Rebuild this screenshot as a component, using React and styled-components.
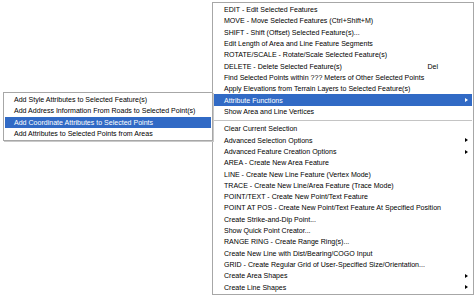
import React from 'react'
import styled, { createGlobalStyle } from 'styled-components'

const GlobalStyle = createGlobalStyle`
  body {
    margin: 0;
    background: #fff;
    font-family: "Liberation Sans", Arial, sans-serif;
  }
`

const Screen = styled.div`
  position: relative;
  width: 474px;
  height: 295px;
  overflow: hidden;
  background: #fff;
`

const Menu = styled.div`
  display: flex;
  flex-direction: column;
  box-sizing: border-box;
  width: 262px;
  margin: 2px 0 0 212px;
  padding: 1px;
  background: #fff;
  border: 1px solid #a7a7a7;
`

const SubMenu = styled(Menu)`
  position: absolute;
  left: 3px;
  top: 92px;
  width: 210px;
  margin: 0;
  box-shadow: 1px 1px 0 #c9c9c9;
`

const Item = styled.div`
  display: flex;
  align-items: center;
  height: 11.3px;
  padding-left: ${p => p.$indent || 10}px;
  font-size: 7.05px;
  white-space: nowrap;
  color: ${p => (p.$active ? '#fff' : '#000')};
  background: ${p => (p.$active ? '#316ac5' : 'transparent')};
`

const Label = styled.span`
  flex: 1;
`

const Shortcut = styled.span`
  margin-right: 22px;
`

const ArrowCell = styled.span`
  display: flex;
  align-items: center;
  justify-content: center;
  width: 12px;
  height: 100%;
`

const Arrow = styled.span`
  width: 0;
  height: 0;
  border-top: 2.5px solid transparent;
  border-bottom: 2.5px solid transparent;
  border-left: 3px solid ${p => (p.$active ? '#fff' : '#000')};
`

const Separator = styled.div`
  display: flex;
  align-items: center;
  height: 6.3px;
  &::after {
    content: '';
    flex: 1;
    height: 1px;
    background: #c4c4c4;
  }
`

const topItems = [
  { label: 'EDIT - Edit Selected Features' },
  { label: 'MOVE - Move Selected Features (Ctrl+Shift+M)' },
  { label: 'SHIFT - Shift (Offset) Selected Feature(s)...' },
  { label: 'Edit Length of Area and Line Feature Segments' },
  { label: 'ROTATE/SCALE - Rotate/Scale Selected Feature(s)' },
  { label: 'DELETE - Delete Selected Feature(s)', shortcut: 'Del' },
  { label: 'Find Selected Points within ??? Meters of Other Selected Points' },
  { label: 'Apply Elevations from Terrain Layers to Selected Feature(s)' },
  { label: 'Attribute Functions', sub: true, active: true },
  { label: 'Show Area and Line Vertices' },
]

const bottomItems = [
  { label: 'Clear Current Selection' },
  { label: 'Advanced Selection Options', sub: true },
  { label: 'Advanced Feature Creation Options', sub: true },
  { label: 'AREA - Create New Area Feature' },
  { label: 'LINE - Create New Line Feature (Vertex Mode)' },
  { label: 'TRACE - Create New Line/Area Feature (Trace Mode)' },
  { label: 'POINT/TEXT - Create New Point/Text Feature' },
  { label: 'POINT AT POS - Create New Point/Text Feature At Specified Position' },
  { label: 'Create Strike-and-Dip Point...' },
  { label: 'Show Quick Point Creator...' },
  { label: 'RANGE RING - Create Range Ring(s)...' },
  { label: 'Create New Line with Dist/Bearing/COGO Input' },
  { label: 'GRID - Create Regular Grid of User-Specified Size/Orientation...' },
  { label: 'Create Area Shapes', sub: true },
  { label: 'Create Line Shapes', sub: true },
]

const attributeItems = [
  { label: 'Add Style Attributes to Selected Feature(s)' },
  { label: 'Add Address Information From Roads to Selected Point(s)' },
  { label: 'Add Coordinate Attributes to Selected Points', active: true },
  { label: 'Add Attributes to Selected Points from Areas' },
]

const MenuRow = ({ item }) => (
  <Item $active={item.active}>
    <Label>{item.label}</Label>
    {item.shortcut && <Shortcut>{item.shortcut}</Shortcut>}
    <ArrowCell>{item.sub && <Arrow $active={item.active} />}</ArrowCell>
  </Item>
)

const App = () => {
  return (
    <Screen>
      <GlobalStyle />
      <Menu>
        {topItems.map(item => <MenuRow key={item.label} item={item} />)}
        <Separator />
        {bottomItems.map(item => <MenuRow key={item.label} item={item} />)}
      </Menu>
      <SubMenu>
        {attributeItems.map(item => (
          <Item key={item.label} $active={item.active} $indent={9}>
            <Label>{item.label}</Label>
          </Item>
        ))}
      </SubMenu>
    </Screen>
  )
}

export default App
